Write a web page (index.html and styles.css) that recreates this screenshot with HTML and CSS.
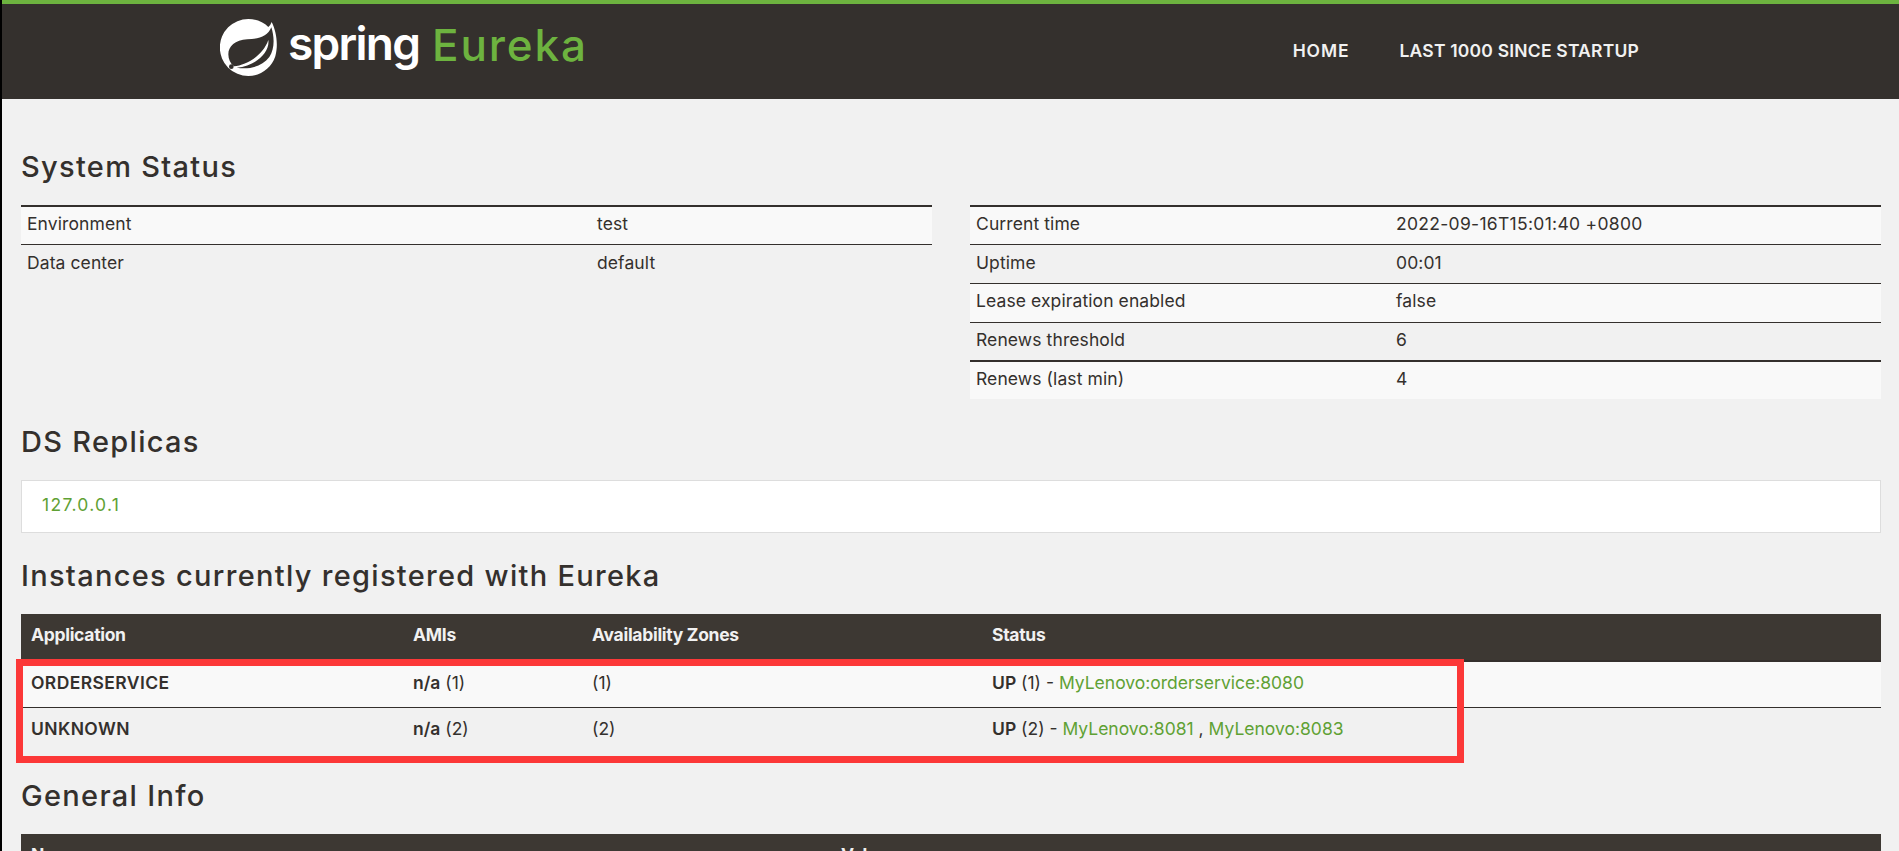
FILE: index.html
```
<!DOCTYPE html>
<html lang="en">
<head>
  <meta charset="UTF-8">
  <title>Eureka</title>
  <link rel="stylesheet" href="styles.css">
</head>
<body>

  <nav class="navbar">
    <a class="brand" href="#">
      <svg width="370" height="70" viewBox="0 0 370 70">
        <!-- Leaf badge -->
        <g transform="translate(0 4) scale(0.3333)">
          <path fill="#fff" d="M85 0C108 0 130 9 145 24Q152 18 155 9C168 35 176 75 166 112C154 148 122 171 85 171A85.5 85.5 0 0 1 85 0Z"/>
          <path fill="#34302d" d="M154 25C143 52 118 60 82 61C45 63 25 82 25 106C25 121 31 134 42 142C77 138 128 112 145 63C150 96 112 141 50 146C86 152 126 144 148 114C165 89 163 52 154 25Z"/>
          <circle cx="34" cy="143" r="7" fill="#34302d"/>
        </g>
        <text class="brand-spring" x="68" y="45" textLength="133">spring</text>
        <text class="brand-eureka" x="212" y="46" textLength="154">Eureka</text>
      </svg>
    </a>
    <ul class="nav-links">
      <li><a class="nav-home" href="#">HOME</a></li>
      <li><a class="nav-last" href="#">LAST 1000 SINCE STARTUP</a></li>
    </ul>
  </nav>

  <main class="content">
    <h1 class="first">System Status</h1>
    <div class="status-row">
      <table class="status-table env-table">
        <tr><td>Environment</td><td>test</td></tr>
        <tr><td>Data center</td><td>default</td></tr>
      </table>
      <table class="status-table time-table">
        <tr><td>Current time</td><td class="date">2022-09-16T15:01:40 +0800</td></tr>
        <tr><td>Uptime</td><td>00:01</td></tr>
        <tr><td>Lease expiration enabled</td><td>false</td></tr>
        <tr><td>Renews threshold</td><td>6</td></tr>
        <tr><td>Renews (last min)</td><td>4</td></tr>
      </table>
    </div>

    <h1>DS Replicas</h1>
    <ul class="replicas">
      <li><a href="#">127.0.0.1</a></li>
    </ul>

    <h1>Instances currently registered with Eureka</h1>
    <div class="instances-wrap">
      <table class="instances">
        <thead>
          <tr><th>Application</th><th>AMIs</th><th>Availability Zones</th><th>Status</th></tr>
        </thead>
        <tbody>
          <tr>
            <td><b class="app-name">ORDERSERVICE</b></td>
            <td><b>n/a</b> (1)</td>
            <td>(1)</td>
            <td><b>UP</b> (1) - <a href="#">MyLenovo:orderservice:8080</a></td>
          </tr>
          <tr>
            <td><b class="app-name">UNKNOWN</b></td>
            <td><b>n/a</b> (2)</td>
            <td>(2)</td>
            <td><b>UP</b> (2) - <a href="#">MyLenovo:8081</a> , <a href="#">MyLenovo:8083</a></td>
          </tr>
        </tbody>
      </table>
      <div class="highlight"></div>
    </div>

    <h1>General Info</h1>
    <table class="instances info">
      <thead>
        <tr><th>Name</th><th>Value</th></tr>
      </thead>
    </table>
  </main>

</body>
</html>
```
FILE: styles.css
```
* {
  margin: 0;
  padding: 0;
  box-sizing: border-box;
}

body {
  height: 851px;
  overflow: hidden;
  background: #f1f1f1;
  border-left: 2px solid #000;
  color: #34302d;
  font-family: Inter, sans-serif;
  font-size: 17.5px;
  line-height: 25px;
}

a {
  color: #5fa134;
  text-decoration: none;
}

b {
  font-weight: 600;
}

/* Navbar */
.navbar {
  display: flex;
  align-items: flex-start;
  justify-content: space-between;
  height: 99px;
  padding: 11px 260px 0 218px;
  background: #34302d;
  border-top: 4px solid #6db33f;
}

.brand-spring {
  font-size: 46px;
  font-weight: 600;
  fill: #fff;
}

.brand-eureka {
  font-size: 44px;
  font-weight: 500;
  fill: #6db33f;
}

.nav-links {
  display: flex;
  gap: 50px;
  padding-top: 23px;
  list-style: none;
}

.nav-links a {
  color: #f1f1f1;
  font-weight: 600;
}

.nav-home {
  letter-spacing: 0.9px;
}

.nav-last {
  letter-spacing: 0.2px;
}

/* Content */
.content {
  padding: 0 18px 0 19px;
}

h1 {
  height: 38px;
  margin: 24px 0 19px;
  font-size: 29px;
  font-weight: 500;
  line-height: 38px;
  letter-spacing: 1.3px;
  white-space: nowrap;
}

h1.first {
  margin-top: 49px;
}

table {
  table-layout: fixed;
  width: 100%;
  border-spacing: 0;
}

/* System status */
.status-row {
  display: flex;
  align-items: flex-start;
  gap: 38px;
}

.status-table td {
  height: 39px;
  padding: 0 7px 4px;
  border-top: 1px solid #34302d;
  letter-spacing: 0.1px;
  white-space: nowrap;
}

.status-table tr:nth-child(odd) td {
  background: #f9f9f9;
}

.status-table tr:first-child td,
.status-table tr:nth-child(5) td {
  border-top-width: 2px;
}

.status-table tr:nth-child(3) td {
  padding-bottom: 6px;
}

.status-table tr:nth-child(4) td {
  height: 38px;
}

.status-table td:first-child {
  padding-left: 6px;
}

.status-table .date {
  letter-spacing: 0.3px;
}

.env-table td:first-child {
  width: 569px;
}

.time-table td:first-child {
  width: 419px;
}

/* Replicas */
.replicas {
  height: 53px;
  padding: 11px 20px;
  background: #fff;
  border: 1px solid #ddd;
  list-style: none;
}

.replicas a {
  letter-spacing: 1.3px;
}

/* Instances */
.instances-wrap {
  position: relative;
  height: 139px;
}

.instances th {
  height: 48px;
  padding: 0 10px 5px;
  background: #3d3833;
  border-bottom: 2px solid #34302d;
  color: #f1f1f1;
  letter-spacing: -0.3px;
  text-align: left;
}

.instances th:nth-child(1) { width: 382px; }
.instances th:nth-child(2) { width: 179px; }
.instances th:nth-child(3) { width: 400px; }
.info th:nth-child(1) { width: 810px; }
.info th:nth-child(2) { width: auto; }

.instances td {
  height: 45px;
  padding: 0 10px 5px;
}

.instances tbody tr:first-child td {
  background: #f9f9f9;
}

.instances tbody tr:last-child td {
  height: 46px;
  border-top: 1px solid #34302d;
}

.app-name {
  letter-spacing: 0.4px;
}

/* Red frame around the registered rows */
.highlight {
  position: absolute;
  top: 45px;
  left: -5px;
  width: 1448px;
  height: 104px;
  border: 7px solid #fc3838;
}
```
